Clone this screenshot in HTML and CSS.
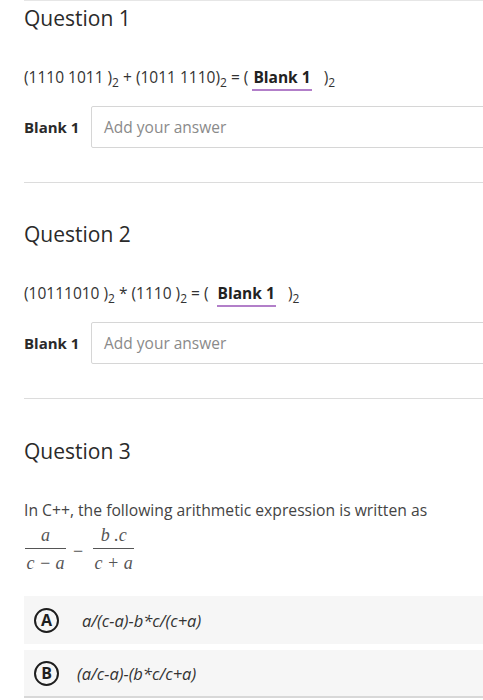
FILE: index.html
```html
<!DOCTYPE html>
<html>
<head>
<meta charset="utf-8">
<link rel="stylesheet" href="styles.css">
</head>
<body>
<div class="page">
  <section class="question q1">
    <h2 class="q-title">Question 1</h2>
    <p class="formula">(1110 1011 )<sub>2</sub> + (1011 1110)<sub>2</sub> = ( <span class="blank">Blank 1</span>&nbsp;&nbsp;&nbsp;)<sub>2</sub></p>
    <div class="answer-row">
      <span class="answer-label">Blank 1</span>
      <div class="answer-input">Add your answer</div>
    </div>
  </section>
  <section class="question q2">
    <h2 class="q-title">Question 2</h2>
    <p class="formula">(10111010 )<sub>2</sub> * (1110 )<sub>2</sub> = (&nbsp;&nbsp;<span class="blank">Blank 1</span>&nbsp;&nbsp;&nbsp;)<sub>2</sub></p>
    <div class="answer-row">
      <span class="answer-label">Blank 1</span>
      <div class="answer-input">Add your answer</div>
    </div>
  </section>
  <section class="question q3">
    <h2 class="q-title">Question 3</h2>
    <p class="prompt">In C++, the following arithmetic expression is written as</p>
    <div class="math">
      <span class="frac"><span class="num">a</span><span class="den">c − a</span></span>
      <span class="minus">−</span>
      <span class="frac"><span class="num">b .c</span><span class="den">c + a</span></span>
    </div>
    <div class="options">
      <div class="option opt-a"><span class="letter">A</span><span class="opt-text">a/(c-a)-b*c/(c+a)</span></div>
      <div class="option opt-b"><span class="letter">B</span><span class="opt-text">(a/c-a)-(b*c/c+a)</span></div>
    </div>
  </section>
</div>
</body>
</html>
```

FILE: styles.css
```css
html, body {
  margin: 0;
  padding: 0;
  overflow: hidden;
  background: #fff;
}
body {
  font-family: "Open Sans", "Liberation Sans", sans-serif;
  color: #333;
  width: 483px;
  height: 700px;
}
.page {
  padding-left: 24px;
}
.question {
  border-top: 1px solid #dcdcdc;
}
.q1 {
  border-top-color: #e6e6e6;
}
.q-title {
  margin: 0;
  font-size: 21px;
  font-weight: 400;
  line-height: 28px;
  color: #2a2a2a;
}
.q1 .q-title { margin-top: 3px; }
.q2 .q-title { margin-top: 37px; }
.q3 .q-title { margin-top: 38px; }

.formula {
  margin: 35px 0 0;
  font-size: 15.5px;
  line-height: 20px;
  color: #333;
  white-space: nowrap;
}
.formula sub {
  font-size: 12px;
  line-height: 0;
  vertical-align: -4px;
}
.blank {
  font-size: 15.5px;
  font-weight: 700;
  color: #222;
  padding: 0 1px 1px;
  border-bottom: 2px solid #b27fc9;
}
.answer-row {
  margin-top: 19px;
  display: flex;
  align-items: center;
  margin-right: -4px;
}
.answer-label {
  width: 67px;
  font-size: 15px;
  font-weight: 700;
  color: #2a2a2a;
}
.answer-input {
  flex: 1;
  height: 40px;
  border: 1px solid #d6d6d6;
  border-radius: 2px;
  box-sizing: content-box;
  padding-left: 12px;
  display: flex;
  align-items: center;
  font-size: 15.5px;
  color: #8a8a8a;
}
.q1 .answer-row, .q2 .answer-row { margin-bottom: 34px; }

.prompt {
  margin: 33px 0 0;
  font-size: 15.7px;
  line-height: 24px;
  color: #444;
}
.math {
  display: flex;
  align-items: center;
  margin-top: 4px;
  padding-left: 1px;
  font-family: "Liberation Serif", "DejaVu Serif", serif;
  font-style: italic;
  font-size: 18px;
  color: #555;
}
.frac {
  display: inline-flex;
  flex-direction: column;
  align-items: stretch;
  text-align: center;
  width: 41px;
}
.num {
  line-height: 18px;
  padding-bottom: 4px;
  border-bottom: 1px solid #555;
}
.den {
  line-height: 18px;
  padding-top: 5px;
}
.minus {
  font-style: normal;
  margin: 4px 10px 0 7px;
}
.options {
  margin-top: 24px;
  display: flex;
  flex-direction: column;
  gap: 6px;
}
.option {
  height: 48px;
  background: #f6f6f6;
  display: flex;
  align-items: center;
  padding-left: 10px;
}
.opt-b {
  border-bottom: 2px solid #d8d8d8;
  height: 46px;
}
.letter {
  box-sizing: border-box;
  width: 25px;
  height: 25px;
  border: 2.5px solid #1e1e1e;
  border-radius: 50%;
  display: flex;
  align-items: center;
  justify-content: center;
  font-size: 16px;
  font-weight: 700;
  line-height: 1;
  color: #1e1e1e;
  flex-shrink: 0;
}
.opt-text {
  font-style: italic;
  font-size: 16.5px;
  color: #333;
}
.opt-a .opt-text { margin-left: 23px; }
.opt-b .opt-text { margin-left: 18px; }
```
